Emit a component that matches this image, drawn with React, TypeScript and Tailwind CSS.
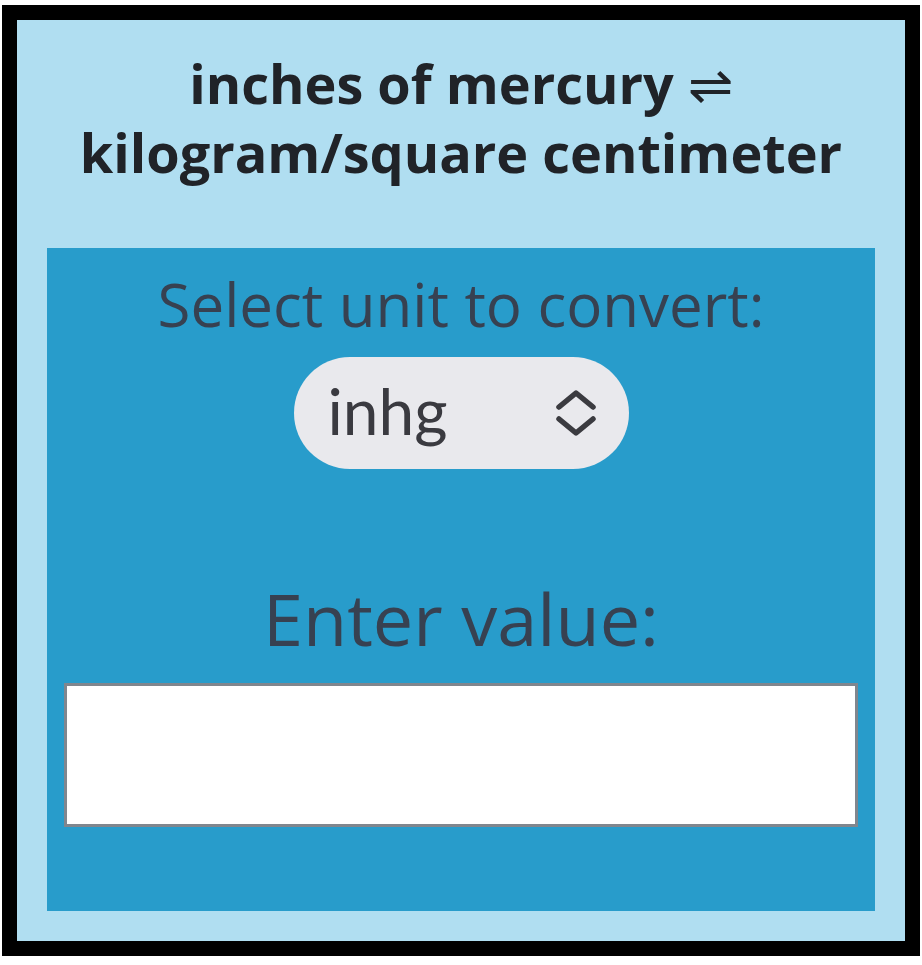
const sans = { fontFamily: '"Open Sans", "Noto Sans", sans-serif' };

function UpDownIcon() {
  return (
    <svg width="42" height="46" viewBox="0 0 42 46" fill="none" className="text-[#3b3b40]">
      <path d="M4 17 L21 3 L38 17" stroke="currentColor" strokeWidth="5.5" strokeLinecap="round" strokeLinejoin="round" />
      <path d="M4 29 L21 43 L38 29" stroke="currentColor" strokeWidth="5.5" strokeLinecap="round" strokeLinejoin="round" />
    </svg>
  );
}

export default function App() {
  return (
    <div className="min-h-screen w-full bg-white pl-[2px] pt-[5px]">
      <div className="flex h-[951px] w-[918px] flex-col border-[15px] border-black bg-[#b0def1] px-[30px] pb-[30px]">
        <div className="flex h-[228px] flex-col items-center pt-[30px]">
          <h1
            className="text-center text-[#202328] font-bold text-[54px] leading-[67px]"
            style={sans}
          >
            inches of mercury <span className="font-extralight" style={{ fontFamily: '"DejaVu Sans", sans-serif' }}>⇌</span>
            <br />
            kilogram/square centimeter
          </h1>
        </div>

        <div className="flex flex-1 flex-col items-center bg-[#289ccb] px-[17px] pt-[20px]">
          <label className="text-[60px] leading-[72px] text-[#374151]" style={sans}>
            Select unit to convert:
          </label>
          <div className="mt-[17px] flex h-[112px] w-[335px] shrink-0 items-center justify-between rounded-full bg-[#e9e9ed] pl-[34px] pr-[32px]">
            <span className="text-[64px] leading-none text-[#3a3a40] -mt-[4px]" style={{ fontFamily: 'Lato, "Open Sans", sans-serif' }}>
              inhg
            </span>
            <UpDownIcon />
          </div>
          <label className="mt-[106px] text-[72px] leading-[86px] text-[#374151]" style={sans}>
            Enter value:
          </label>
          <input
            type="text"
            className="mt-[22px] h-[144px] w-full shrink-0 border-[3px] border-[#80868e] bg-white outline-none"
          />
        </div>
      </div>
    </div>
  );
}
